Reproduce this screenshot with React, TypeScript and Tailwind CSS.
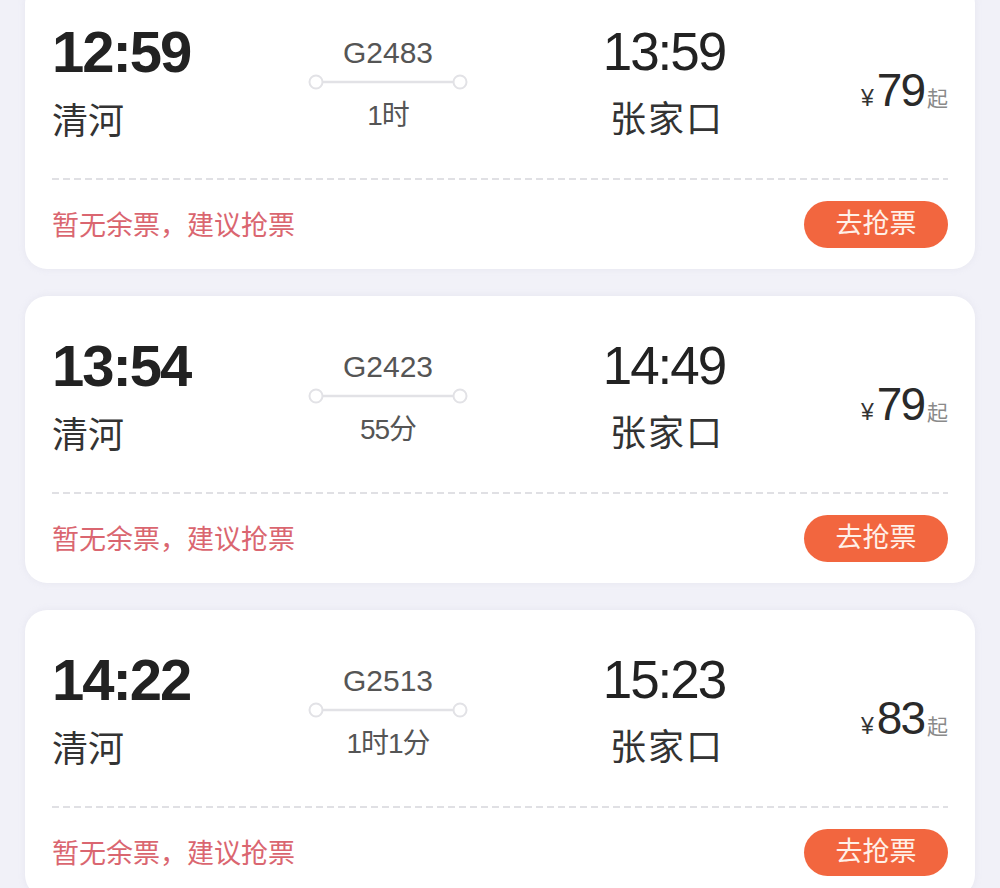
import React from "react";

type Train = {
  dep: string;
  arr: string;
  no: string;
  dur: string;
  price: string;
};

const trains: Train[] = [
  { dep: "12:59", arr: "13:59", no: "G2483", dur: "1时", price: "79" },
  { dep: "13:54", arr: "14:49", no: "G2423", dur: "55分", price: "79" },
  { dep: "14:22", arr: "15:23", no: "G2513", dur: "1时1分", price: "83" },
];

function Route() {
  return (
    <svg width="160" height="16" viewBox="0 0 160 16" className="block">
      <line x1="15" y1="8" x2="145" y2="8" stroke="#e2e2e6" strokeWidth="2.5" />
      <circle cx="8" cy="8" r="6.5" fill="#fff" stroke="#e2e2e6" strokeWidth="2" />
      <circle cx="152" cy="8" r="6.5" fill="#fff" stroke="#e2e2e6" strokeWidth="2" />
    </svg>
  );
}

function Card({ t }: { t: Train }) {
  return (
    <div className="mx-[25px] h-[287px] rounded-[22px] bg-white px-[27px] flex flex-col shadow-[0_0_6px_rgba(200,200,220,0.25)]">
      <div className="h-[196px] flex items-start">
        <div className="w-[200px] pt-[41px] flex flex-col items-start">
          <div className="text-[58px] leading-[58px] font-bold tracking-[-2px] text-[#222]">{t.dep}</div>
          <div className="mt-[23px] text-[36px] leading-[36px] text-[#333]">清河</div>
        </div>
        <div className="w-[272px] pt-[56px] flex flex-col items-center">
          <div className="text-[30px] leading-[30px] text-[#555]">{t.no}</div>
          <div className="mt-[6px]">
            <Route />
          </div>
          <div className="mt-[12px] text-[28px] leading-[28px] text-[#555] tracking-[-1px]">{t.dur}</div>
        </div>
        <div className="w-[280px] pt-[43px] flex flex-col items-center">
          <div className="text-[53px] leading-[53px] tracking-[-2px] text-[#222]">{t.arr}</div>
          <div className="mt-[24px] text-[36px] leading-[36px] tracking-[2px] text-[#333] pl-[6px]">张家口</div>
        </div>
        <div className="flex-1 pt-[86px] flex justify-end items-baseline">
          <span className="text-[23px] leading-[22px] text-[#333] mr-[3px]">¥</span>
          <span className="text-[46px] leading-[44px] tracking-[-2px] text-[#2a2a2a]">{t.price}</span>
          <span className="text-[21px] leading-[21px] text-[#8a8a8a] ml-[3px]">起</span>
        </div>
      </div>
      <div className="h-[2px] bg-[repeating-linear-gradient(90deg,#e0e0e4_0_7px,transparent_7px_11px)]" />
      <div className="flex-1 flex items-center justify-between">
        <div className="text-[27px] leading-[28px] text-[#da6670] pt-[2px]">暂无余票，建议抢票</div>
        <div className="w-[144px] h-[47px] rounded-full bg-[#f2663f] flex items-center justify-center text-[27px] leading-[27px] text-[#fff0e8]">
          去抢票
        </div>
      </div>
    </div>
  );
}

export default function App() {
  return (
    <div className="w-[1000px] h-[888px] overflow-hidden bg-[#f1f1f8] font-['Liberation_Sans','Noto_Sans_CJK_SC',sans-serif]">
      <div className="-mt-[18px] flex flex-col gap-[27px]">
        {trains.map((t) => (
          <Card key={t.no} t={t} />
        ))}
      </div>
    </div>
  );
}
